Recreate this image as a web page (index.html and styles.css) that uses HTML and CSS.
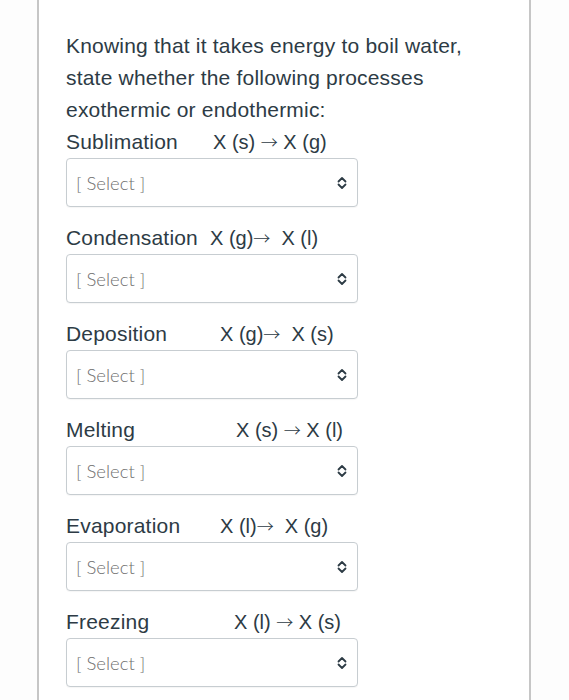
FILE: index.html
```html
<!DOCTYPE html>
<html>
<head>
<meta charset="utf-8">
<link rel="stylesheet" href="styles.css">
</head>
<body>
<div class="frame">
  <div class="content">
    <p class="intro">Knowing that it takes energy to boil water, state whether the following processes exothermic or endothermic:</p>

    <div class="item">
      <div class="label"><span class="name name-sub">Sublimation</span><span class="rx">X (s) <span class="arr">→</span> X (g)</span></div>
      <div class="select"><span class="ph">[ Select ]</span><svg class="chev" width="10" height="14" viewBox="0 0 10 14"><path d="M1.5 5.5 L5 2 L8.5 5.5 M1.5 8.5 L5 12 L8.5 8.5" fill="none" stroke="#2d3b45" stroke-width="1.8" stroke-linecap="round" stroke-linejoin="round"/></svg></div>
    </div>

    <div class="item">
      <div class="label"><span class="name name-con">Condensation</span><span class="rx">X (g)<span class="arr">→</span>&nbsp; X (l)</span></div>
      <div class="select"><span class="ph">[ Select ]</span><svg class="chev" width="10" height="14" viewBox="0 0 10 14"><path d="M1.5 5.5 L5 2 L8.5 5.5 M1.5 8.5 L5 12 L8.5 8.5" fill="none" stroke="#2d3b45" stroke-width="1.8" stroke-linecap="round" stroke-linejoin="round"/></svg></div>
    </div>

    <div class="item">
      <div class="label"><span class="name name-dep">Deposition</span><span class="rx">X (g)<span class="arr">→</span>&nbsp; X (s)</span></div>
      <div class="select"><span class="ph">[ Select ]</span><svg class="chev" width="10" height="14" viewBox="0 0 10 14"><path d="M1.5 5.5 L5 2 L8.5 5.5 M1.5 8.5 L5 12 L8.5 8.5" fill="none" stroke="#2d3b45" stroke-width="1.8" stroke-linecap="round" stroke-linejoin="round"/></svg></div>
    </div>

    <div class="item">
      <div class="label"><span class="name name-mel">Melting</span><span class="rx">X (s) <span class="arr">→</span> X (l)</span></div>
      <div class="select"><span class="ph">[ Select ]</span><svg class="chev" width="10" height="14" viewBox="0 0 10 14"><path d="M1.5 5.5 L5 2 L8.5 5.5 M1.5 8.5 L5 12 L8.5 8.5" fill="none" stroke="#2d3b45" stroke-width="1.8" stroke-linecap="round" stroke-linejoin="round"/></svg></div>
    </div>

    <div class="item">
      <div class="label"><span class="name name-eva">Evaporation</span><span class="rx">X (l)<span class="arr">→</span>&nbsp; X (g)</span></div>
      <div class="select"><span class="ph">[ Select ]</span><svg class="chev" width="10" height="14" viewBox="0 0 10 14"><path d="M1.5 5.5 L5 2 L8.5 5.5 M1.5 8.5 L5 12 L8.5 8.5" fill="none" stroke="#2d3b45" stroke-width="1.8" stroke-linecap="round" stroke-linejoin="round"/></svg></div>
    </div>

    <div class="item">
      <div class="label"><span class="name name-fre">Freezing</span><span class="rx">X (l) <span class="arr">→</span> X (s)</span></div>
      <div class="select"><span class="ph">[ Select ]</span><svg class="chev" width="10" height="14" viewBox="0 0 10 14"><path d="M1.5 5.5 L5 2 L8.5 5.5 M1.5 8.5 L5 12 L8.5 8.5" fill="none" stroke="#2d3b45" stroke-width="1.8" stroke-linecap="round" stroke-linejoin="round"/></svg></div>
    </div>
  </div>
</div>
</body>
</html>
```

FILE: styles.css
```css
html, body {
  margin: 0;
  padding: 0;
  background: #fdfdfd;
}

.frame {
  margin-left: 37px;
  width: 490px;
  min-height: 700px;
  border-left: 2px solid #c6c6c6;
  border-right: 2px solid #c6c6c6;
  background: #ffffff;
}

.content {
  padding: 30px 0 0 27px;
  font-family: "Liberation Sans", Arial, sans-serif;
  font-size: 21px;
  letter-spacing: 0.2px;
  line-height: 32px;
  color: #2d3b45;
}

.intro {
  margin: 0;
  width: 420px;
}

.item {
  margin-bottom: 15px;
}

.label {
  display: flex;
  align-items: baseline;
  white-space: nowrap;
  height: 32px;
}

.name { flex: 0 0 auto; }
.name-sub { width: 147px; }
.name-con { width: 144px; }
.name-dep { width: 154px; }
.name-mel { width: 170px; }
.name-eva { width: 154px; }
.name-fre { width: 168px; }

.rx {
  font-size: 20px;
  letter-spacing: 0;
}

.arr {
  font-family: "Noto Sans CJK JP", "DejaVu Sans", sans-serif;
  font-weight: 300;
  font-size: 17px;
  letter-spacing: 0;
}

.select {
  width: 292px;
  height: 49px;
  box-sizing: border-box;
  border: 1px solid #c7cdd1;
  border-radius: 4px;
  background: #fff;
  display: flex;
  align-items: center;
  justify-content: space-between;
  padding: 0 10px 0 9px;
  box-shadow: 0 1px 1px rgba(0,0,0,0.04);
}

.ph {
  font-family: Lato, "Liberation Sans", sans-serif;
  font-weight: 300;
  font-size: 18.5px;
  letter-spacing: 0;
  color: #6e6e6e;
}

.chev {
  display: block;
}
```
